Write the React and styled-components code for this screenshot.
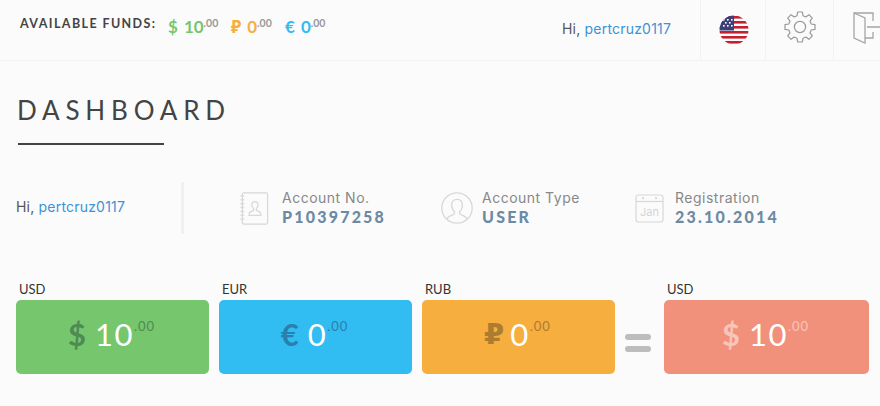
import React from 'react';
import styled, { createGlobalStyle } from 'styled-components';

const GlobalStyle = createGlobalStyle`
  html, body {
    margin: 0;
    background: #fbfbfb;
  }
  * {
    box-sizing: border-box;
  }
  body {
    width: 880px;
    height: 406px;
    overflow: hidden;
    font-family: Lato, "Noto Sans", sans-serif;
    color: #444;
  }
`;

const Page = styled.div`
  width: 880px;
  height: 406px;
  overflow: hidden;
`;

const TopBar = styled.header`
  height: 61px;
  display: flex;
  align-items: stretch;
  border-bottom: 1px solid #f2f2f2;
`;

const Funds = styled.div`
  flex: 1;
  display: flex;
  align-items: flex-start;
  padding-left: 20px;
`;

const FundsLabel = styled.span`
  width: 148px;
  margin-top: 16px;
  font-size: 12.5px;
  line-height: 16px;
  font-weight: 700;
  letter-spacing: 1.4px;
  color: #444;
  white-space: nowrap;
`;

const Fund = styled.span`
  width: ${p => p.$w}px;
  margin-top: 17px;
  font-size: 17px;
  line-height: 20px;
  font-weight: 700;
  color: ${p => p.$color};
  white-space: nowrap;
  sup {
    font-size: 10.5px;
    font-weight: 700;
    color: #999;
    vertical-align: 6px;
    line-height: 0;
  }
  b {
    font-weight: 700;
    margin-left: 6px;
  }
`;

const Greeting = styled.div`
  font-family: Inter, sans-serif;
  font-size: 14px;
  letter-spacing: 0.2px;
  color: #555;
  white-space: nowrap;
  a {
    color: #3d92d8;
    text-decoration: none;
  }
`;

const TopGreeting = styled(Greeting)`
  width: 138px;
  padding-top: 20px;
`;

const IconCell = styled.div`
  width: ${p => p.$w}px;
  border-left: 1px solid #f2f2f2;
  display: flex;
  align-items: center;
  padding-left: ${p => p.$pad}px;
  padding-bottom: ${p => p.$lift || 0}px;
  overflow: hidden;
  svg {
    flex-shrink: 0;
  }
`;

const Title = styled.h1`
  margin: 33px 0 0 17px;
  font-size: 26px;
  line-height: 32px;
  font-weight: 400;
  letter-spacing: 5.8px;
  color: #444;
`;

const Rule = styled.div`
  width: 146px;
  height: 2px;
  margin: 17px 0 0 18px;
  background: #444;
`;

const InfoRow = styled.section`
  display: flex;
  align-items: center;
  height: 52px;
  margin-top: 37px;
  padding-left: 16px;
`;

const InfoGreeting = styled(Greeting)`
  width: 168px;
  height: 100%;
  display: flex;
  align-items: center;
  padding-bottom: 4px;
  border-right: 3px solid #f0f0f0;
  margin-right: 55px;
`;

const InfoItem = styled.div`
  display: flex;
  align-items: center;
  width: ${p => p.$w}px;
  gap: ${p => p.$gap}px;
`;

const InfoLabel = styled.div`
  font-family: Inter, sans-serif;
  font-size: 14px;
  letter-spacing: 0.5px;
  line-height: 18px;
  color: #888;
`;

const InfoValue = styled.div`
  font-size: 16px;
  line-height: 20px;
  font-weight: 900;
  letter-spacing: 2.2px;
  color: #6c8ba3;
`;

const Balances = styled.section`
  display: flex;
  align-items: flex-end;
  margin-top: 46px;
  padding-left: 16px;
`;

const Balance = styled.div`
  width: ${p => p.$w}px;
  margin-right: ${p => p.$gap}px;
`;

const BalanceLabel = styled.div`
  font-size: 13px;
  line-height: 18px;
  height: 20px;
  padding-left: ${p => p.$pad}px;
  color: #333;
`;

const Card = styled.div`
  height: 74px;
  border-radius: 5px;
  background: ${p => p.$bg};
  display: flex;
  align-items: center;
  justify-content: center;
  padding-right: 2px;
  padding-bottom: 6px;
  color: #fff;
`;

const Symbol = styled.span`
  font-family: ${p => (p.$wide ? '"DejaVu Sans", sans-serif' : 'inherit')};
  font-size: ${p => (p.$wide ? 29 : 31)}px;
  font-weight: 700;
  color: ${p => p.$color};
  margin-right: ${p => (p.$wide ? 6 : 9)}px;
`;

const Amount = styled.span`
  font-size: 31px;
  font-weight: 400;
  letter-spacing: 1.5px;
  white-space: nowrap;
`;

const Cents = styled.sup`
  font-size: 13px;
  letter-spacing: 1px;
  color: ${p => p.$color};
  vertical-align: 15px;
  line-height: 0;
`;

const EqualsSign = styled.div`
  width: 26px;
  margin-right: 13px;
  margin-bottom: 22px;
  display: flex;
  flex-direction: column;
  gap: 6px;
  i {
    display: block;
    height: 6px;
    border-radius: 3px;
    background: #bdbdbd;
  }
`;

const Flag = () => (
  <svg width="30" height="30" viewBox="0 0 30 30">
    <defs>
      <clipPath id="flagClip"><circle cx="15" cy="15" r="14.5" /></clipPath>
    </defs>
    <g clipPath="url(#flagClip)">
      <rect width="30" height="30" fill="#fff" />
      {[0, 1, 2, 3, 4, 5].map(i => (
        <rect key={i} y={1 + i * 5} width="30" height="2.6" fill="#c6202f" />
      ))}
      <rect width="15" height="15.5" fill="#3c3f78" />
      {[[4, 4], [8, 4], [12, 4], [6, 7], [10, 7], [4, 10], [8, 10], [12, 10]].map(([x, y], i) => (
        <rect key={i} x={x} y={y} width="1.6" height="1.6" fill="#fff" />
      ))}
    </g>
  </svg>
);

// 8 toothed outline around the centre of the gear
const gearPath = () => {
  const pt = (r, deg) => {
    const a = (deg * Math.PI) / 180;
    return `${(16 + r * Math.cos(a)).toFixed(2)} ${(16 + r * Math.sin(a)).toFixed(2)}`;
  };
  let d = '';
  for (let i = 0; i < 8; i++) {
    const c = i * 45 - 90;
    d += `${i ? 'L' : 'M'}${pt(11.6, c - 15)} L${pt(15.2, c - 9)} L${pt(15.2, c + 9)} L${pt(11.6, c + 15)} `;
  }
  return d + 'Z';
};

const Gear = () => (
  <svg width="32" height="32" viewBox="0 0 32 32" fill="none" stroke="#999" strokeWidth="1.2" strokeLinejoin="round">
    <path d={gearPath()} />
    <circle cx="16" cy="16" r="5.6" />
  </svg>
);

const Door = () => (
  <svg width="40" height="32" viewBox="0 0 40 32" fill="none" stroke="#a5a5a5" strokeWidth="1.3">
    <path d="M1 1h19v8M20 20v6h-8" />
    <path d="M1 1l11 5v25L1 26z" />
    <path d="M14 15h20M30 11l4 4-4 4" />
  </svg>
);

const AddressBook = () => (
  <svg width="30" height="33" viewBox="0 0 30 34" fill="none" stroke="#d8d8d8" strokeWidth="1.3">
    <rect x="3" y="1" width="26" height="32" rx="1.5" />
    {[4, 8, 12, 16, 20, 24, 28].map(y => (
      <path key={y} d={`M1 ${y}h4`} />
    ))}
    <path d="M10 24v-2c0-1.6 3.2-2.2 4.6-3.2v-1.6c-1.2-1-1.8-2.4-1.8-4 0-2 1.2-3.4 3.2-3.4s3.2 1.4 3.2 3.4c0 1.6-.6 3-1.8 4v1.6c1.4 1 4.6 1.6 4.6 3.2v2z" />
  </svg>
);

const UserCircle = () => (
  <svg width="32" height="32" viewBox="0 0 32 32" fill="none" stroke="#d8d8d8" strokeWidth="1.3">
    <circle cx="16" cy="16" r="15.2" />
    <path d="M6 27c.6-3 6-3.6 7.4-5.4v-2.2c-1.8-1.4-2.8-3.6-2.8-6.2 0-3.4 2-5.8 5.4-5.8s5.4 2.4 5.4 5.8c0 2.6-1 4.8-2.8 6.2v2.2c1.4 1.8 6.8 2.4 7.4 5.4" />
  </svg>
);

const CalendarIcon = () => (
  <svg width="29" height="29" viewBox="0 0 29 29" fill="none" stroke="#d8d8d8" strokeWidth="1.2">
    <rect x="1" y="1" width="27" height="27" rx="2.5" />
    <path d="M1 7.5h27" />
    <circle cx="8" cy="4.2" r=".5" />
    <circle cx="21" cy="4.2" r=".5" />
    <text x="14.5" y="22" textAnchor="middle" fontFamily="Inter, sans-serif" fontSize="11" fill="#d4d4d4" stroke="none">Jan</text>
  </svg>
);

const UserLink = () => (
  <>Hi, <a href="#user">pertcruz0117</a></>
);

const info = [
  { label: 'Account No.', value: 'P10397258', icon: <AddressBook />, w: 202, gap: 13 },
  { label: 'Account Type', value: 'USER', icon: <UserCircle />, w: 194, gap: 9 },
  { label: 'Registration', value: '23.10.2014', icon: <CalendarIcon />, w: 160, gap: 11 },
];

const balances = [
  { code: 'USD', symbol: '$', amount: '10', bg: '#75c66d', sym: '#4f8a52', cents: '#4f8a52', pad: 3 },
  { code: 'EUR', symbol: '€', amount: '0', bg: '#31bcf2', sym: '#2a80ab', cents: '#2a80ab', pad: 3 },
  { code: 'RUB', symbol: '₽', amount: '0', bg: '#f6ae3f', sym: '#ac7d31', cents: '#ac7d31', pad: 3, wide: true },
];

export default function App() {
  return (
    <Page>
      <GlobalStyle />
      <TopBar>
        <Funds>
          <FundsLabel>AVAILABLE FUNDS:</FundsLabel>
          <Fund $w={63} $color="#75c66d">$<b>10</b><sup>.00</sup></Fund>
          <Fund $w={54} $color="#f6ae3f">₽<b>0</b><sup>.00</sup></Fund>
          <Fund $w={50} $color="#31bcf2">€<b>0</b><sup>.00</sup></Fund>
        </Funds>
        <TopGreeting><UserLink /></TopGreeting>
        <IconCell $w={65} $pad={18}><Flag /></IconCell>
        <IconCell $w={68} $pad={18} $lift={6}><Gear /></IconCell>
        <IconCell $w={47} $pad={19} $lift={4}><Door /></IconCell>
      </TopBar>

      <Title>DASHBOARD</Title>
      <Rule />

      <InfoRow>
        <InfoGreeting><span><UserLink /></span></InfoGreeting>
        {info.map(item => (
          <InfoItem key={item.label} $w={item.w} $gap={item.gap}>
            {item.icon}
            <div>
              <InfoLabel>{item.label}</InfoLabel>
              <InfoValue>{item.value}</InfoValue>
            </div>
          </InfoItem>
        ))}
      </InfoRow>

      <Balances>
        {balances.map(b => (
          <Balance key={b.code} $w={193} $gap={10}>
            <BalanceLabel $pad={b.pad}>{b.code}</BalanceLabel>
            <Card $bg={b.bg}>
              <Symbol $color={b.sym} $wide={b.wide}>{b.symbol}</Symbol>
              <Amount>{b.amount}<Cents $color={b.cents}>.00</Cents></Amount>
            </Card>
          </Balance>
        ))}
        <EqualsSign><i /><i /></EqualsSign>
        <Balance $w={205} $gap={0}>
          <BalanceLabel $pad={3}>USD</BalanceLabel>
          <Card $bg="#f1917b">
            <Symbol $color="#f8c5b9">$</Symbol>
            <Amount>10<Cents $color="#f8c5b9">.00</Cents></Amount>
          </Card>
        </Balance>
      </Balances>
    </Page>
  );
}
